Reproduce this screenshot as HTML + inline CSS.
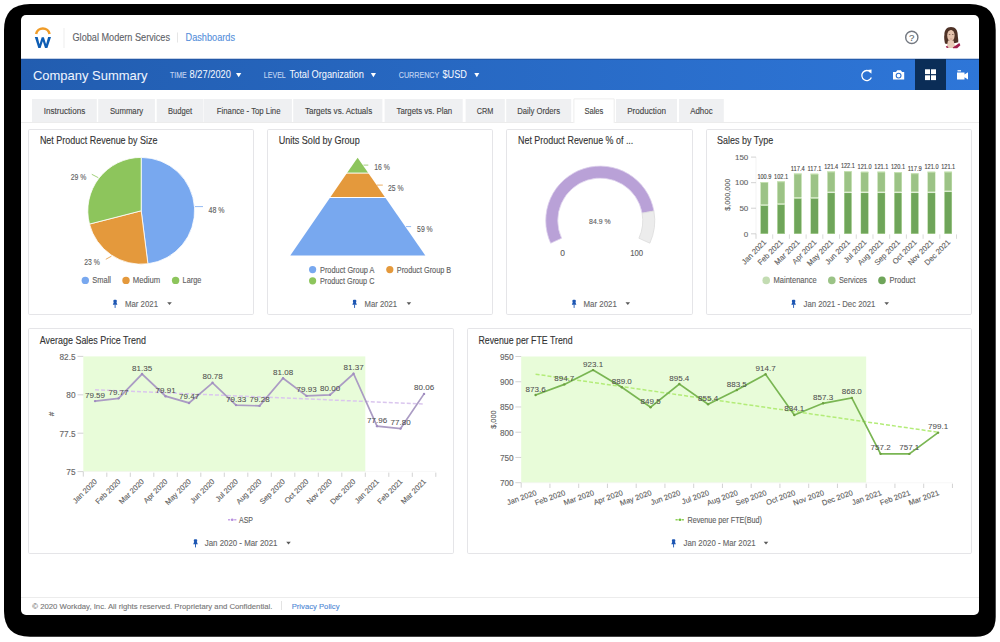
<!DOCTYPE html><html><head><meta charset="utf-8"><style>html,body{margin:0;padding:0;background:#fff;overflow:hidden}svg{display:block}text{font-family:"Liberation Sans",sans-serif}</style></head><body>
<svg width="1000" height="642" viewBox="0 0 1000 642">
<rect width="1000" height="642" fill="#fff"/>
<path d="M30,4 L969.7,4 Q995.7,4 995.7,30 L995.7,616.8 Q995.7,636.8 975.7,636.8 L30,636.8 Q4,636.8 4,610.8 L4,30 Q4,4 30,4 Z" fill="#000"/>
<rect x="21" y="15" width="958" height="600" rx="5" fill="#fff"/>
<path d="M36.1,33.9 A6.9,6.9 0 0 1 49.6,33.9" fill="none" stroke="#f09c28" stroke-width="2.5" stroke-linecap="butt"/>
<path d="M34.8,37 L37.7,37 L39.5,44.3 L41.7,37.3 L43.9,37.3 L46.1,44.3 L48.1,37 L51,37 L47.4,47.9 L45,47.9 L42.8,41.3 L40.6,47.9 L38.3,47.9 Z" fill="#0d5db4"/>
<rect x="63.5" y="28" width="1" height="20" fill="#ededed"/>
<text x="72.5" y="40.8" font-size="10.40" fill="#5e6268" stroke="#5e6268" stroke-width="0.12" text-anchor="start" font-weight="normal" textLength="97.5" lengthAdjust="spacingAndGlyphs">Global Modern Services</text>
<rect x="177" y="32.5" width="1" height="10" fill="#e6e6e6"/>
<text x="185.5" y="40.8" font-size="10.40" fill="#5590db" stroke="#5590db" stroke-width="0.12" text-anchor="start" font-weight="normal" textLength="49.5" lengthAdjust="spacingAndGlyphs">Dashboards</text>
<circle cx="911.8" cy="37.4" r="6.1" fill="none" stroke="#737880" stroke-width="1.4"/>
<text x="911.8" y="40.9" font-size="9.68" fill="#62676d" stroke="#62676d" stroke-width="0.12" text-anchor="middle" font-weight="normal">?</text>
<defs><filter id="soft" x="-20%" y="-20%" width="140%" height="140%"><feGaussianBlur stdDeviation="0.45"/></filter></defs>
<g filter="url(#soft)">
<path d="M951,27 C955.6,27 957.6,30.5 957.7,34.5 C957.8,37.5 958.6,40 958.2,42.2 L955.5,43 L947,44 L945,43.5 C944.4,40.5 943.8,37.5 944.4,34.8 C944.3,30.5 946.5,27 951,27 Z" fill="#4f3226"/>
<ellipse cx="950.9" cy="35.5" rx="3.7" ry="5.7" fill="#e5c3ad"/>
<path d="M948,40.5 L953.6,40.5 L954.5,44.5 L956.5,46.8 L954,48 L948.2,48 L946.8,46.4 Z" fill="#e9cbb8"/>
<path d="M952.8,47.6 L959.3,42.9 L960.4,45.2 L957.2,48.2 L953,48.3 Z" fill="#a01d4c"/>
<path d="M945.8,46 L948,46.5 L948.4,48 L946.5,47.8 Z" fill="#a01d4c"/>
<path d="M947.3,32.2 C948.2,29.6 953.6,29 955,32.5 L955.2,29.5 C953.2,27.9 948.8,27.9 947.3,30.2 Z" fill="#4f3226"/>
<rect x="948.8" y="34.2" width="1.5" height="0.8" fill="#7a5a4c"/><rect x="952" y="34.2" width="1.5" height="0.8" fill="#7a5a4c"/>
<rect x="949.8" y="38.6" width="2.6" height="0.8" fill="#c9968a"/>
</g>
<defs><linearGradient id="bg" x1="21" y1="0" x2="979" y2="0" gradientUnits="userSpaceOnUse"><stop offset="0" stop-color="#225db0"/><stop offset="1" stop-color="#2e76d8"/></linearGradient></defs>
<rect x="21" y="59" width="958" height="31" fill="url(#bg)"/>
<rect x="21" y="58.7" width="958" height="1.2" fill="#2456a4" opacity="0.9"/>
<rect x="915" y="59" width="31" height="31" fill="#0b2d57"/>
<text x="32.9" y="79.5" font-size="13.39" fill="#eef4ff" stroke="#eef4ff" stroke-width="0.04" text-anchor="start" font-weight="normal" textLength="114.7" lengthAdjust="spacingAndGlyphs">Company Summary</text>
<text x="170.0" y="77.7" font-size="8.45" fill="#c3d5f2" stroke="#c3d5f2" stroke-width="0.12" text-anchor="start" font-weight="normal" textLength="16.7" lengthAdjust="spacingAndGlyphs">TIME</text>
<text x="189.6" y="78.3" font-size="10.61" fill="#f4f8ff" stroke="#f4f8ff" stroke-width="0.04" text-anchor="start" font-weight="normal" textLength="41.3" lengthAdjust="spacingAndGlyphs">8/27/2020</text>
<path d="M236,73 L241.3,73 L238.65,77.2 Z" fill="#fff"/>
<text x="263.8" y="77.7" font-size="8.45" fill="#c3d5f2" stroke="#c3d5f2" stroke-width="0.12" text-anchor="start" font-weight="normal" textLength="22.0" lengthAdjust="spacingAndGlyphs">LEVEL</text>
<text x="289.5" y="78.3" font-size="10.61" fill="#f4f8ff" stroke="#f4f8ff" stroke-width="0.04" text-anchor="start" font-weight="normal" textLength="74.3" lengthAdjust="spacingAndGlyphs">Total Organization</text>
<path d="M370.8,73 L376,73 L373.4,77.2 Z" fill="#fff"/>
<text x="398.8" y="77.7" font-size="8.45" fill="#c3d5f2" stroke="#c3d5f2" stroke-width="0.12" text-anchor="start" font-weight="normal" textLength="40.5" lengthAdjust="spacingAndGlyphs">CURRENCY</text>
<text x="442.5" y="78.3" font-size="10.61" fill="#f4f8ff" stroke="#f4f8ff" stroke-width="0.04" text-anchor="start" font-weight="normal" textLength="24.5" lengthAdjust="spacingAndGlyphs">$USD</text>
<path d="M474.3,73 L479.3,73 L476.8,77.2 Z" fill="#fff"/>
<path d="M870.6,72.2 A5,5 0 1 0 871.4,77.6" fill="none" stroke="#fff" stroke-width="1.3"/>
<path d="M867.5,70.0 L871.6,69.6 L871.4,73.8 Z" fill="#fff"/>
<path d="M893,72 L896,72 L897.3,70.2 L900.8,70.2 L902.1,72 L904.2,72 L904.2,79.6 L893,79.6 Z" fill="#fff"/>
<circle cx="898.6" cy="75.6" r="2.4" fill="none" stroke="#2c71d1" stroke-width="1.1"/>
<rect x="925" y="69.3" width="5" height="4.8" fill="#fff"/>
<rect x="925" y="75.3" width="5" height="4.8" fill="#fff"/>
<rect x="931" y="69.3" width="5" height="4.8" fill="#fff"/>
<rect x="931" y="75.3" width="5" height="4.8" fill="#fff"/>
<path d="M957,72.5 L964.5,72.5 L964.5,74.6 L968,72.3 L968,79.4 L964.5,77.2 L964.5,79.4 L957,79.4 Z" fill="#fff"/>
<rect x="957.5" y="70.2" width="3.5" height="1.2" fill="#fff"/>
<rect x="21" y="122" width="958" height="1" fill="#ececec"/>
<rect x="32" y="99" width="64.8" height="23" fill="#eff0f2"/>
<text x="43.8" y="113.6" font-size="8.86" fill="#454545" stroke="#454545" stroke-width="0.12" text-anchor="start" font-weight="normal" textLength="41.4" lengthAdjust="spacingAndGlyphs">Instructions</text>
<rect x="98.2" y="99" width="56.7" height="23" fill="#eff0f2"/>
<text x="109.9" y="113.6" font-size="8.86" fill="#454545" stroke="#454545" stroke-width="0.12" text-anchor="start" font-weight="normal" textLength="33.3" lengthAdjust="spacingAndGlyphs">Summary</text>
<rect x="156.7" y="99" width="46.80000000000001" height="23" fill="#eff0f2"/>
<text x="168.0" y="113.6" font-size="8.86" fill="#454545" stroke="#454545" stroke-width="0.12" text-anchor="start" font-weight="normal" textLength="24.1" lengthAdjust="spacingAndGlyphs">Budget</text>
<rect x="204" y="99" width="87.89999999999998" height="23" fill="#eff0f2"/>
<text x="216.8" y="113.6" font-size="8.86" fill="#454545" stroke="#454545" stroke-width="0.12" text-anchor="start" font-weight="normal" textLength="63.7" lengthAdjust="spacingAndGlyphs">Finance - Top Line</text>
<rect x="293.2" y="99" width="89.19999999999999" height="23" fill="#eff0f2"/>
<text x="304.9" y="113.6" font-size="8.86" fill="#454545" stroke="#454545" stroke-width="0.12" text-anchor="start" font-weight="normal" textLength="67.3" lengthAdjust="spacingAndGlyphs">Targets vs. Actuals</text>
<rect x="384.6" y="99" width="78.09999999999997" height="23" fill="#eff0f2"/>
<text x="396.5" y="113.6" font-size="8.86" fill="#454545" stroke="#454545" stroke-width="0.12" text-anchor="start" font-weight="normal" textLength="55.7" lengthAdjust="spacingAndGlyphs">Targets vs. Plan</text>
<rect x="465.6" y="99" width="39.19999999999999" height="23" fill="#eff0f2"/>
<text x="476.8" y="113.6" font-size="8.86" fill="#454545" stroke="#454545" stroke-width="0.12" text-anchor="start" font-weight="normal" textLength="16.6" lengthAdjust="spacingAndGlyphs">CRM</text>
<rect x="506.2" y="99" width="65.00000000000006" height="23" fill="#eff0f2"/>
<text x="517.2" y="113.6" font-size="8.86" fill="#454545" stroke="#454545" stroke-width="0.12" text-anchor="start" font-weight="normal" textLength="42.8" lengthAdjust="spacingAndGlyphs">Daily Orders</text>
<rect x="573.5" y="98.5" width="41.10000000000002" height="24.5" fill="#fff"/>
<path d="M573.9,123 L573.9,98.9 L614.2,98.9 L614.2,123" fill="none" stroke="#ebebeb" stroke-width="0.9"/>
<text x="584.4" y="113.6" font-size="8.86" fill="#454545" stroke="#454545" stroke-width="0.12" text-anchor="start" font-weight="normal" textLength="19.0" lengthAdjust="spacingAndGlyphs">Sales</text>
<rect x="616" y="99" width="61" height="23" fill="#eff0f2"/>
<text x="627.2" y="113.6" font-size="8.86" fill="#454545" stroke="#454545" stroke-width="0.12" text-anchor="start" font-weight="normal" textLength="38.7" lengthAdjust="spacingAndGlyphs">Production</text>
<rect x="679" y="99" width="44.799999999999955" height="23" fill="#eff0f2"/>
<text x="690.2" y="113.6" font-size="8.86" fill="#454545" stroke="#454545" stroke-width="0.12" text-anchor="start" font-weight="normal" textLength="22.4" lengthAdjust="spacingAndGlyphs">Adhoc</text>
<rect x="28.5" y="129.5" width="225" height="185" rx="1.2" fill="#fff" stroke="#e5e5e8" stroke-width="1"/>
<rect x="267.5" y="129.5" width="225" height="185" rx="1.2" fill="#fff" stroke="#e5e5e8" stroke-width="1"/>
<rect x="506.5" y="129.5" width="186" height="185" rx="1.2" fill="#fff" stroke="#e5e5e8" stroke-width="1"/>
<rect x="706.5" y="129.5" width="265" height="185" rx="1.2" fill="#fff" stroke="#e5e5e8" stroke-width="1"/>
<rect x="28.5" y="328.5" width="425" height="225" rx="1.2" fill="#fff" stroke="#e5e5e8" stroke-width="1"/>
<rect x="467.5" y="328.5" width="504" height="225" rx="1.2" fill="#fff" stroke="#e5e5e8" stroke-width="1"/>
<text x="39.9" y="144.0" font-size="9.99" fill="#333" stroke="#333" stroke-width="0.12" text-anchor="start" font-weight="normal" textLength="117.6" lengthAdjust="spacingAndGlyphs">Net Product Revenue by Size</text>
<text x="278.7" y="144.0" font-size="9.99" fill="#333" stroke="#333" stroke-width="0.12" text-anchor="start" font-weight="normal" textLength="81.0" lengthAdjust="spacingAndGlyphs">Units Sold by Group</text>
<text x="518.0" y="144.0" font-size="9.99" fill="#333" stroke="#333" stroke-width="0.12" text-anchor="start" font-weight="normal" textLength="115.3" lengthAdjust="spacingAndGlyphs">Net Product Revenue % of ...</text>
<text x="717.1" y="144.0" font-size="9.99" fill="#333" stroke="#333" stroke-width="0.12" text-anchor="start" font-weight="normal" textLength="56.1" lengthAdjust="spacingAndGlyphs">Sales by Type</text>
<text x="39.8" y="343.6" font-size="9.99" fill="#333" stroke="#333" stroke-width="0.12" text-anchor="start" font-weight="normal" textLength="106.2" lengthAdjust="spacingAndGlyphs">Average Sales Price Trend</text>
<text x="478.5" y="343.6" font-size="9.99" fill="#333" stroke="#333" stroke-width="0.12" text-anchor="start" font-weight="normal" textLength="94.0" lengthAdjust="spacingAndGlyphs">Revenue per FTE Trend</text>
<rect x="113.4" y="299.8" width="3.4" height="2.6" rx="1" fill="#1d56b3"/>
<path d="M113.9,302.1 L116.3,302.1 L117.4,304.7 L112.8,304.7 Z" fill="#1d56b3"/>
<rect x="114.65" y="304.5" width="0.9" height="3.4" fill="#1d56b3"/>
<text x="125.0" y="306.7" font-size="8.65" fill="#666" stroke="#666" stroke-width="0.12" text-anchor="start" font-weight="normal" textLength="33.0" lengthAdjust="spacingAndGlyphs">Mar 2021</text>
<path d="M167.2,302.3 L171.79999999999998,302.3 L169.5,304.90000000000003 Z" fill="#5a5a5a"/>
<rect x="352.9" y="299.8" width="3.4" height="2.6" rx="1" fill="#1d56b3"/>
<path d="M353.4,302.1 L355.8,302.1 L356.9,304.7 L352.3,304.7 Z" fill="#1d56b3"/>
<rect x="354.15" y="304.5" width="0.9" height="3.4" fill="#1d56b3"/>
<text x="364.6" y="306.7" font-size="8.65" fill="#666" stroke="#666" stroke-width="0.12" text-anchor="start" font-weight="normal" textLength="32.5" lengthAdjust="spacingAndGlyphs">Mar 2021</text>
<path d="M406.6,302.3 L411.20000000000005,302.3 L408.90000000000003,304.90000000000003 Z" fill="#5a5a5a"/>
<rect x="572.4" y="299.8" width="3.4" height="2.6" rx="1" fill="#1d56b3"/>
<path d="M572.9,302.1 L575.3,302.1 L576.4,304.7 L571.8,304.7 Z" fill="#1d56b3"/>
<rect x="573.65" y="304.5" width="0.9" height="3.4" fill="#1d56b3"/>
<text x="583.5" y="306.7" font-size="8.65" fill="#666" stroke="#666" stroke-width="0.12" text-anchor="start" font-weight="normal" textLength="33.3" lengthAdjust="spacingAndGlyphs">Mar 2021</text>
<path d="M625.5,302.3 L630.1,302.3 L627.8,304.90000000000003 Z" fill="#5a5a5a"/>
<rect x="791.9" y="299.8" width="3.4" height="2.6" rx="1" fill="#1d56b3"/>
<path d="M792.4,302.1 L794.8,302.1 L795.9,304.7 L791.3,304.7 Z" fill="#1d56b3"/>
<rect x="793.15" y="304.5" width="0.9" height="3.4" fill="#1d56b3"/>
<text x="803.6" y="306.7" font-size="8.65" fill="#666" stroke="#666" stroke-width="0.12" text-anchor="start" font-weight="normal" textLength="71.8" lengthAdjust="spacingAndGlyphs">Jan 2021 - Dec 2021</text>
<path d="M884.4,302.3 L889.0,302.3 L886.6999999999999,304.90000000000003 Z" fill="#5a5a5a"/>
<rect x="193.8" y="539.3" width="3.4" height="2.6" rx="1" fill="#1d56b3"/>
<path d="M194.3,541.6 L196.70000000000002,541.6 L197.8,544.2 L193.20000000000002,544.2 Z" fill="#1d56b3"/>
<rect x="195.05" y="544" width="0.9" height="3.4" fill="#1d56b3"/>
<text x="204.8" y="546.2" font-size="8.65" fill="#666" stroke="#666" stroke-width="0.12" text-anchor="start" font-weight="normal" textLength="72.6" lengthAdjust="spacingAndGlyphs">Jan 2020 - Mar 2021</text>
<path d="M286.2,541.8 L290.8,541.8 L288.5,544.4 Z" fill="#5a5a5a"/>
<rect x="671.9" y="539.3" width="3.4" height="2.6" rx="1" fill="#1d56b3"/>
<path d="M672.4,541.6 L674.8,541.6 L675.9,544.2 L671.3,544.2 Z" fill="#1d56b3"/>
<rect x="673.15" y="544" width="0.9" height="3.4" fill="#1d56b3"/>
<text x="683.6" y="546.2" font-size="8.65" fill="#666" stroke="#666" stroke-width="0.12" text-anchor="start" font-weight="normal" textLength="72.1" lengthAdjust="spacingAndGlyphs">Jan 2020 - Mar 2021</text>
<path d="M763.7,541.8 L768.3000000000001,541.8 L766.0,544.4 Z" fill="#5a5a5a"/>
<path d="M141.2,210.8 L141.20,157.40 A53.4,53.4 0 0 1 147.89,263.78 Z" fill="#78a8ef" stroke="#fff" stroke-width="0.8"/>
<path d="M141.2,210.8 L147.89,263.78 A53.4,53.4 0 0 1 89.48,224.08 Z" fill="#e4993c" stroke="#fff" stroke-width="0.8"/>
<path d="M141.2,210.8 L89.48,224.08 A53.4,53.4 0 0 1 141.20,157.40 Z" fill="#8dc55c" stroke="#fff" stroke-width="0.8"/>
<line x1="195" y1="206.6" x2="203" y2="206.6" stroke="#78a8ef" stroke-width="0.8"/>
<path d="M91.8,174.3 L98.3,177.7" stroke="#8dc55c" stroke-width="0.8"/>
<path d="M105.8,259.3 L111.4,256.2" stroke="#e4993c" stroke-width="0.8"/>
<text x="208.6" y="212.6" font-size="8.24" fill="#606060" stroke="#606060" stroke-width="0.12" text-anchor="start" font-weight="normal" textLength="16.0" lengthAdjust="spacingAndGlyphs">48 %</text>
<text x="70.8" y="180.4" font-size="8.24" fill="#606060" stroke="#606060" stroke-width="0.12" text-anchor="start" font-weight="normal" textLength="15.6" lengthAdjust="spacingAndGlyphs">29 %</text>
<text x="84.3" y="265.4" font-size="8.24" fill="#606060" stroke="#606060" stroke-width="0.12" text-anchor="start" font-weight="normal" textLength="15.6" lengthAdjust="spacingAndGlyphs">23 %</text>
<circle cx="85.3" cy="280.4" r="3.7" fill="#78a8ef"/>
<text x="92.3" y="283.4" font-size="8.45" fill="#606060" stroke="#606060" stroke-width="0.12" text-anchor="start" font-weight="normal" textLength="18.7" lengthAdjust="spacingAndGlyphs">Small</text>
<circle cx="126" cy="280.4" r="3.7" fill="#e4993c"/>
<text x="132.8" y="283.4" font-size="8.45" fill="#606060" stroke="#606060" stroke-width="0.12" text-anchor="start" font-weight="normal" textLength="27.4" lengthAdjust="spacingAndGlyphs">Medium</text>
<circle cx="175.6" cy="280.4" r="3.7" fill="#8dc55c"/>
<text x="182.6" y="283.4" font-size="8.45" fill="#606060" stroke="#606060" stroke-width="0.12" text-anchor="start" font-weight="normal" textLength="18.7" lengthAdjust="spacingAndGlyphs">Large</text>
<path d="M357.6,157.7 L368.27,173.1 L346.99,173.1 Z" fill="#8dc55c"/>
<path d="M346.99,173.1 L368.27,173.1 L385.18,197.5 L330.18,197.5 Z" fill="#e4993c"/>
<path d="M330.18,197.5 L385.18,197.5 L425.3,255.4 L290.3,255.4 Z" fill="#78a8ef"/>
<rect x="345.9918116683726" y="172.6" width="23.2794268167861" height="1" fill="#fff"/>
<rect x="329.1840327533265" y="197.0" width="56.99488229273288" height="1" fill="#fff"/>
<line x1="363.5" y1="165.1" x2="368.3" y2="165.1" stroke="#8dc55c" stroke-width="0.8"/>
<line x1="376.8" y1="185.1" x2="382.8" y2="185.1" stroke="#e4993c" stroke-width="0.8"/>
<line x1="406" y1="226.6" x2="411.1" y2="226.6" stroke="#78a8ef" stroke-width="0.8"/>
<text x="374.3" y="170.4" font-size="8.24" fill="#606060" stroke="#606060" stroke-width="0.12" text-anchor="start" font-weight="normal" textLength="15.6" lengthAdjust="spacingAndGlyphs">16 %</text>
<text x="388.0" y="190.9" font-size="8.24" fill="#606060" stroke="#606060" stroke-width="0.12" text-anchor="start" font-weight="normal" textLength="15.6" lengthAdjust="spacingAndGlyphs">25 %</text>
<text x="417.1" y="232.0" font-size="8.24" fill="#606060" stroke="#606060" stroke-width="0.12" text-anchor="start" font-weight="normal" textLength="15.6" lengthAdjust="spacingAndGlyphs">59 %</text>
<circle cx="312.6" cy="269.6" r="3.6" fill="#78a8ef"/>
<text x="320.0" y="272.6" font-size="8.45" fill="#606060" stroke="#606060" stroke-width="0.12" text-anchor="start" font-weight="normal" textLength="54.4" lengthAdjust="spacingAndGlyphs">Product Group A</text>
<circle cx="389.8" cy="269.6" r="3.6" fill="#e4993c"/>
<text x="396.8" y="272.6" font-size="8.45" fill="#606060" stroke="#606060" stroke-width="0.12" text-anchor="start" font-weight="normal" textLength="54.4" lengthAdjust="spacingAndGlyphs">Product Group B</text>
<circle cx="312.6" cy="280.8" r="3.6" fill="#8dc55c"/>
<text x="320.0" y="283.8" font-size="8.45" fill="#606060" stroke="#606060" stroke-width="0.12" text-anchor="start" font-weight="normal" textLength="54.4" lengthAdjust="spacingAndGlyphs">Product Group C</text>
<path d="M550.66,243.20 A54.5,54.5 0 1 1 653.91,211.06 L642.09,213.16 A42.5,42.5 0 1 0 561.58,238.22 Z" fill="#b9a1d7" stroke="#ddd0ec" stroke-width="0.8"/>
<path d="M653.91,211.06 A54.5,54.5 0 0 1 649.84,243.20 L638.92,238.22 A42.5,42.5 0 0 0 642.09,213.16 Z" fill="#ececec" stroke="#dcdcdc" stroke-width="0.8"/>
<text x="599.8" y="223.6" font-size="8.03" fill="#606060" stroke="#606060" stroke-width="0.12" text-anchor="middle" font-weight="normal" textLength="21.5" lengthAdjust="spacingAndGlyphs">84.9 %</text>
<text x="562.6" y="256.3" font-size="8.45" fill="#606060" stroke="#606060" stroke-width="0.12" text-anchor="middle" font-weight="normal">0</text>
<text x="636.6" y="256.3" font-size="8.24" fill="#606060" stroke="#606060" stroke-width="0.12" text-anchor="middle" font-weight="normal" textLength="12.9" lengthAdjust="spacingAndGlyphs">100</text>
<line x1="756.0" y1="157" x2="756.0" y2="233.8" stroke="#f0f0f0" stroke-width="0.8"/>
<line x1="756.0" y1="233.8" x2="756.0" y2="238.8" stroke="#c8c8c8" stroke-width="0.8"/>
<line x1="751" y1="233.80" x2="756.0" y2="233.80" stroke="#c8c8c8" stroke-width="0.8"/>
<text x="748.3" y="236.5" font-size="8.03" fill="#666" stroke="#666" stroke-width="0.12" text-anchor="end" font-weight="normal">0</text>
<line x1="751" y1="208.23" x2="756.0" y2="208.23" stroke="#c8c8c8" stroke-width="0.8"/>
<text x="748.3" y="210.9" font-size="8.03" fill="#666" stroke="#666" stroke-width="0.12" text-anchor="end" font-weight="normal">50</text>
<line x1="751" y1="182.67" x2="756.0" y2="182.67" stroke="#c8c8c8" stroke-width="0.8"/>
<text x="748.3" y="185.4" font-size="8.03" fill="#666" stroke="#666" stroke-width="0.12" text-anchor="end" font-weight="normal">100</text>
<line x1="751" y1="157.10" x2="756.0" y2="157.10" stroke="#c8c8c8" stroke-width="0.8"/>
<text x="748.3" y="159.8" font-size="8.03" fill="#666" stroke="#666" stroke-width="0.12" text-anchor="end" font-weight="normal">150</text>
<text x="0.0" y="0.0" font-size="8.03" fill="#5a5a5a" stroke="#5a5a5a" stroke-width="0.12" text-anchor="middle" font-weight="normal" textLength="32.0" lengthAdjust="spacingAndGlyphs" transform="translate(730.3,194.8) rotate(-90)">$,000,000</text>
<line x1="772.71" y1="234.4" x2="772.71" y2="238.8" stroke="#d0d0d0" stroke-width="0.8"/>
<line x1="789.42" y1="234.4" x2="789.42" y2="238.8" stroke="#d0d0d0" stroke-width="0.8"/>
<line x1="806.13" y1="234.4" x2="806.13" y2="238.8" stroke="#d0d0d0" stroke-width="0.8"/>
<line x1="822.84" y1="234.4" x2="822.84" y2="238.8" stroke="#d0d0d0" stroke-width="0.8"/>
<line x1="839.55" y1="234.4" x2="839.55" y2="238.8" stroke="#d0d0d0" stroke-width="0.8"/>
<line x1="856.26" y1="234.4" x2="856.26" y2="238.8" stroke="#d0d0d0" stroke-width="0.8"/>
<line x1="872.97" y1="234.4" x2="872.97" y2="238.8" stroke="#d0d0d0" stroke-width="0.8"/>
<line x1="889.68" y1="234.4" x2="889.68" y2="238.8" stroke="#d0d0d0" stroke-width="0.8"/>
<line x1="906.39" y1="234.4" x2="906.39" y2="238.8" stroke="#d0d0d0" stroke-width="0.8"/>
<line x1="923.10" y1="234.4" x2="923.10" y2="238.8" stroke="#d0d0d0" stroke-width="0.8"/>
<line x1="939.81" y1="234.4" x2="939.81" y2="238.8" stroke="#d0d0d0" stroke-width="0.8"/>
<line x1="956.52" y1="234.4" x2="956.52" y2="238.8" stroke="#d0d0d0" stroke-width="0.8"/>
<rect x="760.65" y="205.68" width="7.4" height="28.12" fill="#6fa55a" stroke="#b9e09c" stroke-width="0.35"/>
<rect x="760.65" y="182.21" width="7.4" height="22.37" fill="#9cc386" stroke="#c6e6ad" stroke-width="0.35"/>
<rect x="760.65" y="182.01" width="7.4" height="0.9" fill="#c5e0b0"/>
<text x="764.4" y="179.2" font-size="7.00" fill="#444" stroke="#444" stroke-width="0.12" text-anchor="middle" font-weight="normal" textLength="14.0" lengthAdjust="spacingAndGlyphs">100.9</text>
<text x="0.0" y="0.0" font-size="7.62" fill="#606060" stroke="#606060" stroke-width="0.12" text-anchor="end" font-weight="normal" transform="translate(766.86,242.8) rotate(-45)">Jan 2021</text>
<rect x="777.37" y="204.65" width="7.4" height="29.15" fill="#6fa55a" stroke="#b9e09c" stroke-width="0.35"/>
<rect x="777.37" y="181.59" width="7.4" height="21.96" fill="#9cc386" stroke="#c6e6ad" stroke-width="0.35"/>
<rect x="777.37" y="181.39" width="7.4" height="0.9" fill="#c5e0b0"/>
<text x="781.1" y="178.6" font-size="7.00" fill="#444" stroke="#444" stroke-width="0.12" text-anchor="middle" font-weight="normal" textLength="14.0" lengthAdjust="spacingAndGlyphs">102.1</text>
<text x="0.0" y="0.0" font-size="7.62" fill="#606060" stroke="#606060" stroke-width="0.12" text-anchor="end" font-weight="normal" transform="translate(783.57,242.8) rotate(-45)">Feb 2021</text>
<rect x="794.07" y="198.52" width="7.4" height="35.28" fill="#6fa55a" stroke="#b9e09c" stroke-width="0.35"/>
<rect x="794.07" y="173.77" width="7.4" height="23.65" fill="#9cc386" stroke="#c6e6ad" stroke-width="0.35"/>
<rect x="794.07" y="173.57" width="7.4" height="0.9" fill="#c5e0b0"/>
<text x="797.8" y="170.8" font-size="7.00" fill="#444" stroke="#444" stroke-width="0.12" text-anchor="middle" font-weight="normal" textLength="14.0" lengthAdjust="spacingAndGlyphs">117.4</text>
<text x="0.0" y="0.0" font-size="7.62" fill="#606060" stroke="#606060" stroke-width="0.12" text-anchor="end" font-weight="normal" transform="translate(800.27,242.8) rotate(-45)">Mar 2021</text>
<rect x="810.78" y="198.52" width="7.4" height="35.28" fill="#6fa55a" stroke="#b9e09c" stroke-width="0.35"/>
<rect x="810.78" y="173.92" width="7.4" height="23.50" fill="#9cc386" stroke="#c6e6ad" stroke-width="0.35"/>
<rect x="810.78" y="173.72" width="7.4" height="0.9" fill="#c5e0b0"/>
<text x="814.5" y="170.9" font-size="7.00" fill="#444" stroke="#444" stroke-width="0.12" text-anchor="middle" font-weight="normal" textLength="14.0" lengthAdjust="spacingAndGlyphs">117.1</text>
<text x="0.0" y="0.0" font-size="7.62" fill="#606060" stroke="#606060" stroke-width="0.12" text-anchor="end" font-weight="normal" transform="translate(816.99,242.8) rotate(-45)">Apr 2021</text>
<rect x="827.50" y="192.89" width="7.4" height="40.91" fill="#6fa55a" stroke="#b9e09c" stroke-width="0.35"/>
<rect x="827.50" y="171.72" width="7.4" height="20.07" fill="#9cc386" stroke="#c6e6ad" stroke-width="0.35"/>
<rect x="827.50" y="171.52" width="7.4" height="0.9" fill="#c5e0b0"/>
<text x="831.2" y="168.7" font-size="7.00" fill="#444" stroke="#444" stroke-width="0.12" text-anchor="middle" font-weight="normal" textLength="14.0" lengthAdjust="spacingAndGlyphs">121.4</text>
<text x="0.0" y="0.0" font-size="7.62" fill="#606060" stroke="#606060" stroke-width="0.12" text-anchor="end" font-weight="normal" transform="translate(833.70,242.8) rotate(-45)">May 2021</text>
<rect x="844.20" y="192.89" width="7.4" height="40.91" fill="#6fa55a" stroke="#b9e09c" stroke-width="0.35"/>
<rect x="844.20" y="171.37" width="7.4" height="20.43" fill="#9cc386" stroke="#c6e6ad" stroke-width="0.35"/>
<rect x="844.20" y="171.17" width="7.4" height="0.9" fill="#c5e0b0"/>
<text x="847.9" y="168.4" font-size="7.00" fill="#444" stroke="#444" stroke-width="0.12" text-anchor="middle" font-weight="normal" textLength="14.0" lengthAdjust="spacingAndGlyphs">122.1</text>
<text x="0.0" y="0.0" font-size="7.62" fill="#606060" stroke="#606060" stroke-width="0.12" text-anchor="end" font-weight="normal" transform="translate(850.40,242.8) rotate(-45)">Jun 2021</text>
<rect x="860.91" y="192.89" width="7.4" height="40.91" fill="#6fa55a" stroke="#b9e09c" stroke-width="0.35"/>
<rect x="860.91" y="171.93" width="7.4" height="19.86" fill="#9cc386" stroke="#c6e6ad" stroke-width="0.35"/>
<rect x="860.91" y="171.73" width="7.4" height="0.9" fill="#c5e0b0"/>
<text x="864.6" y="168.9" font-size="7.00" fill="#444" stroke="#444" stroke-width="0.12" text-anchor="middle" font-weight="normal" textLength="14.0" lengthAdjust="spacingAndGlyphs">121.0</text>
<text x="0.0" y="0.0" font-size="7.62" fill="#606060" stroke="#606060" stroke-width="0.12" text-anchor="end" font-weight="normal" transform="translate(867.12,242.8) rotate(-45)">Jul 2021</text>
<rect x="877.62" y="192.89" width="7.4" height="40.91" fill="#6fa55a" stroke="#b9e09c" stroke-width="0.35"/>
<rect x="877.62" y="171.88" width="7.4" height="19.92" fill="#9cc386" stroke="#c6e6ad" stroke-width="0.35"/>
<rect x="877.62" y="171.68" width="7.4" height="0.9" fill="#c5e0b0"/>
<text x="881.3" y="168.9" font-size="7.00" fill="#444" stroke="#444" stroke-width="0.12" text-anchor="middle" font-weight="normal" textLength="14.0" lengthAdjust="spacingAndGlyphs">121.1</text>
<text x="0.0" y="0.0" font-size="7.62" fill="#606060" stroke="#606060" stroke-width="0.12" text-anchor="end" font-weight="normal" transform="translate(883.83,242.8) rotate(-45)">Aug 2021</text>
<rect x="894.33" y="192.89" width="7.4" height="40.91" fill="#6fa55a" stroke="#b9e09c" stroke-width="0.35"/>
<rect x="894.33" y="172.39" width="7.4" height="19.40" fill="#9cc386" stroke="#c6e6ad" stroke-width="0.35"/>
<rect x="894.33" y="172.19" width="7.4" height="0.9" fill="#c5e0b0"/>
<text x="898.0" y="169.4" font-size="7.00" fill="#444" stroke="#444" stroke-width="0.12" text-anchor="middle" font-weight="normal" textLength="14.0" lengthAdjust="spacingAndGlyphs">120.1</text>
<text x="0.0" y="0.0" font-size="7.62" fill="#606060" stroke="#606060" stroke-width="0.12" text-anchor="end" font-weight="normal" transform="translate(900.53,242.8) rotate(-45)">Sep 2021</text>
<rect x="911.04" y="192.89" width="7.4" height="40.91" fill="#6fa55a" stroke="#b9e09c" stroke-width="0.35"/>
<rect x="911.04" y="173.51" width="7.4" height="18.28" fill="#9cc386" stroke="#c6e6ad" stroke-width="0.35"/>
<rect x="911.04" y="173.31" width="7.4" height="0.9" fill="#c5e0b0"/>
<text x="914.7" y="170.5" font-size="7.00" fill="#444" stroke="#444" stroke-width="0.12" text-anchor="middle" font-weight="normal" textLength="14.0" lengthAdjust="spacingAndGlyphs">117.9</text>
<text x="0.0" y="0.0" font-size="7.62" fill="#606060" stroke="#606060" stroke-width="0.12" text-anchor="end" font-weight="normal" transform="translate(917.25,242.8) rotate(-45)">Oct 2021</text>
<rect x="927.75" y="192.89" width="7.4" height="40.91" fill="#6fa55a" stroke="#b9e09c" stroke-width="0.35"/>
<rect x="927.75" y="171.93" width="7.4" height="19.86" fill="#9cc386" stroke="#c6e6ad" stroke-width="0.35"/>
<rect x="927.75" y="171.73" width="7.4" height="0.9" fill="#c5e0b0"/>
<text x="931.5" y="168.9" font-size="7.00" fill="#444" stroke="#444" stroke-width="0.12" text-anchor="middle" font-weight="normal" textLength="14.0" lengthAdjust="spacingAndGlyphs">121.0</text>
<text x="0.0" y="0.0" font-size="7.62" fill="#606060" stroke="#606060" stroke-width="0.12" text-anchor="end" font-weight="normal" transform="translate(933.96,242.8) rotate(-45)">Nov 2021</text>
<rect x="944.46" y="191.87" width="7.4" height="41.93" fill="#6fa55a" stroke="#b9e09c" stroke-width="0.35"/>
<rect x="944.46" y="171.88" width="7.4" height="18.89" fill="#9cc386" stroke="#c6e6ad" stroke-width="0.35"/>
<rect x="944.46" y="171.68" width="7.4" height="0.9" fill="#c5e0b0"/>
<text x="948.2" y="168.9" font-size="7.00" fill="#444" stroke="#444" stroke-width="0.12" text-anchor="middle" font-weight="normal" textLength="14.0" lengthAdjust="spacingAndGlyphs">121.1</text>
<text x="0.0" y="0.0" font-size="7.62" fill="#606060" stroke="#606060" stroke-width="0.12" text-anchor="end" font-weight="normal" transform="translate(950.66,242.8) rotate(-45)">Dec 2021</text>
<circle cx="766.2" cy="280.4" r="3.8" fill="#c3dcb2"/>
<text x="773.6" y="283.4" font-size="8.45" fill="#606060" stroke="#606060" stroke-width="0.12" text-anchor="start" font-weight="normal" textLength="43.0" lengthAdjust="spacingAndGlyphs">Maintenance</text>
<circle cx="831.8" cy="280.4" r="3.8" fill="#9bc386"/>
<text x="839.0" y="283.4" font-size="8.45" fill="#606060" stroke="#606060" stroke-width="0.12" text-anchor="start" font-weight="normal" textLength="28.0" lengthAdjust="spacingAndGlyphs">Services</text>
<circle cx="882" cy="280.4" r="3.8" fill="#6fa55a"/>
<text x="889.6" y="283.4" font-size="8.45" fill="#606060" stroke="#606060" stroke-width="0.12" text-anchor="start" font-weight="normal" textLength="25.8" lengthAdjust="spacingAndGlyphs">Product</text>
<rect x="83.3" y="356.4" width="282.00" height="115.20" fill="#e8fcd9"/>
<line x1="77.5" y1="471.60" x2="83.3" y2="471.60" stroke="#c8c8c8" stroke-width="0.8"/>
<text x="75.5" y="475.0" font-size="8.24" fill="#666" stroke="#666" stroke-width="0.12" text-anchor="end" font-weight="normal">75</text>
<line x1="77.5" y1="433.20" x2="83.3" y2="433.20" stroke="#c8c8c8" stroke-width="0.8"/>
<text x="75.5" y="436.6" font-size="8.24" fill="#666" stroke="#666" stroke-width="0.12" text-anchor="end" font-weight="normal">77.5</text>
<line x1="77.5" y1="394.80" x2="83.3" y2="394.80" stroke="#c8c8c8" stroke-width="0.8"/>
<text x="75.5" y="398.2" font-size="8.24" fill="#666" stroke="#666" stroke-width="0.12" text-anchor="end" font-weight="normal">80</text>
<line x1="77.5" y1="356.40" x2="83.3" y2="356.40" stroke="#c8c8c8" stroke-width="0.8"/>
<text x="75.5" y="359.8" font-size="8.24" fill="#666" stroke="#666" stroke-width="0.12" text-anchor="end" font-weight="normal">82.5</text>
<line x1="83.3" y1="471.6" x2="435.80" y2="471.6" stroke="#f2f2f2" stroke-width="0.6"/>
<line x1="83.3" y1="471.6" x2="83.3" y2="476.6" stroke="#c8c8c8" stroke-width="0.8"/>
<line x1="106.80" y1="472.6" x2="106.80" y2="476.90000000000003" stroke="#c8c8c8" stroke-width="0.8"/>
<line x1="130.30" y1="472.6" x2="130.30" y2="476.90000000000003" stroke="#c8c8c8" stroke-width="0.8"/>
<line x1="153.80" y1="472.6" x2="153.80" y2="476.90000000000003" stroke="#c8c8c8" stroke-width="0.8"/>
<line x1="177.30" y1="472.6" x2="177.30" y2="476.90000000000003" stroke="#c8c8c8" stroke-width="0.8"/>
<line x1="200.80" y1="472.6" x2="200.80" y2="476.90000000000003" stroke="#c8c8c8" stroke-width="0.8"/>
<line x1="224.30" y1="472.6" x2="224.30" y2="476.90000000000003" stroke="#c8c8c8" stroke-width="0.8"/>
<line x1="247.80" y1="472.6" x2="247.80" y2="476.90000000000003" stroke="#c8c8c8" stroke-width="0.8"/>
<line x1="271.30" y1="472.6" x2="271.30" y2="476.90000000000003" stroke="#c8c8c8" stroke-width="0.8"/>
<line x1="294.80" y1="472.6" x2="294.80" y2="476.90000000000003" stroke="#c8c8c8" stroke-width="0.8"/>
<line x1="318.30" y1="472.6" x2="318.30" y2="476.90000000000003" stroke="#c8c8c8" stroke-width="0.8"/>
<line x1="341.80" y1="472.6" x2="341.80" y2="476.90000000000003" stroke="#c8c8c8" stroke-width="0.8"/>
<line x1="365.30" y1="472.6" x2="365.30" y2="476.90000000000003" stroke="#c8c8c8" stroke-width="0.8"/>
<line x1="388.80" y1="472.6" x2="388.80" y2="476.90000000000003" stroke="#c8c8c8" stroke-width="0.8"/>
<line x1="412.30" y1="472.6" x2="412.30" y2="476.90000000000003" stroke="#c8c8c8" stroke-width="0.8"/>
<line x1="435.80" y1="472.6" x2="435.80" y2="476.90000000000003" stroke="#c8c8c8" stroke-width="0.8"/>
<line x1="95.05" y1="389.73" x2="424.05" y2="404.02" stroke="#dac6ee" stroke-width="1.5" stroke-dasharray="4,2"/>
<polyline points="95.05,401.10 118.55,398.33 142.05,374.06 165.55,396.18 189.05,402.94 212.55,382.82 236.05,405.09 259.55,405.86 283.05,378.21 306.55,395.88 330.05,394.80 353.55,373.76 377.05,426.13 400.55,428.59 424.05,393.88" fill="none" stroke="#ab9cc4" stroke-width="1.7" stroke-linejoin="miter"/>
<circle cx="95.05" cy="401.10" r="1.2" fill="#a08cc0"/>
<text x="95.0" y="397.5" font-size="8.03" fill="#505050" stroke="#505050" stroke-width="0.06" text-anchor="middle" font-weight="normal">79.59</text>
<circle cx="118.55" cy="398.33" r="1.2" fill="#a08cc0"/>
<text x="118.5" y="394.7" font-size="8.03" fill="#505050" stroke="#505050" stroke-width="0.06" text-anchor="middle" font-weight="normal">79.77</text>
<circle cx="142.05" cy="374.06" r="1.2" fill="#a08cc0"/>
<text x="142.1" y="370.5" font-size="8.03" fill="#505050" stroke="#505050" stroke-width="0.06" text-anchor="middle" font-weight="normal">81.35</text>
<circle cx="165.55" cy="396.18" r="1.2" fill="#a08cc0"/>
<text x="165.6" y="392.6" font-size="8.03" fill="#505050" stroke="#505050" stroke-width="0.06" text-anchor="middle" font-weight="normal">79.91</text>
<circle cx="189.05" cy="402.94" r="1.2" fill="#a08cc0"/>
<text x="189.1" y="399.3" font-size="8.03" fill="#505050" stroke="#505050" stroke-width="0.06" text-anchor="middle" font-weight="normal">79.47</text>
<circle cx="212.55" cy="382.82" r="1.2" fill="#a08cc0"/>
<text x="212.6" y="379.2" font-size="8.03" fill="#505050" stroke="#505050" stroke-width="0.06" text-anchor="middle" font-weight="normal">80.78</text>
<circle cx="236.05" cy="405.09" r="1.2" fill="#a08cc0"/>
<text x="236.1" y="401.5" font-size="8.03" fill="#505050" stroke="#505050" stroke-width="0.06" text-anchor="middle" font-weight="normal">79.33</text>
<circle cx="259.55" cy="405.86" r="1.2" fill="#a08cc0"/>
<text x="259.6" y="402.3" font-size="8.03" fill="#505050" stroke="#505050" stroke-width="0.06" text-anchor="middle" font-weight="normal">79.28</text>
<circle cx="283.05" cy="378.21" r="1.2" fill="#a08cc0"/>
<text x="283.1" y="374.6" font-size="8.03" fill="#505050" stroke="#505050" stroke-width="0.06" text-anchor="middle" font-weight="normal">81.08</text>
<circle cx="306.55" cy="395.88" r="1.2" fill="#a08cc0"/>
<text x="306.6" y="392.3" font-size="8.03" fill="#505050" stroke="#505050" stroke-width="0.06" text-anchor="middle" font-weight="normal">79.93</text>
<circle cx="330.05" cy="394.80" r="1.2" fill="#a08cc0"/>
<text x="330.1" y="391.2" font-size="8.03" fill="#505050" stroke="#505050" stroke-width="0.06" text-anchor="middle" font-weight="normal">80.00</text>
<circle cx="353.55" cy="373.76" r="1.2" fill="#a08cc0"/>
<text x="353.6" y="370.2" font-size="8.03" fill="#505050" stroke="#505050" stroke-width="0.06" text-anchor="middle" font-weight="normal">81.37</text>
<circle cx="377.05" cy="426.13" r="1.2" fill="#a08cc0"/>
<text x="377.1" y="422.5" font-size="8.03" fill="#505050" stroke="#505050" stroke-width="0.06" text-anchor="middle" font-weight="normal">77.96</text>
<circle cx="400.55" cy="428.59" r="1.2" fill="#a08cc0"/>
<text x="400.6" y="425.0" font-size="8.03" fill="#505050" stroke="#505050" stroke-width="0.06" text-anchor="middle" font-weight="normal">77.80</text>
<circle cx="424.05" cy="393.88" r="1.2" fill="#a08cc0"/>
<text x="424.1" y="390.3" font-size="8.03" fill="#505050" stroke="#505050" stroke-width="0.06" text-anchor="middle" font-weight="normal">80.06</text>
<text x="0.0" y="0.0" font-size="7.52" fill="#606060" stroke="#606060" stroke-width="0.12" text-anchor="end" font-weight="normal" transform="translate(97.55,482.1) rotate(-45)">Jan 2020</text>
<text x="0.0" y="0.0" font-size="7.52" fill="#606060" stroke="#606060" stroke-width="0.12" text-anchor="end" font-weight="normal" transform="translate(121.05,482.1) rotate(-45)">Feb 2020</text>
<text x="0.0" y="0.0" font-size="7.52" fill="#606060" stroke="#606060" stroke-width="0.12" text-anchor="end" font-weight="normal" transform="translate(144.55,482.1) rotate(-45)">Mar 2020</text>
<text x="0.0" y="0.0" font-size="7.52" fill="#606060" stroke="#606060" stroke-width="0.12" text-anchor="end" font-weight="normal" transform="translate(168.05,482.1) rotate(-45)">Apr 2020</text>
<text x="0.0" y="0.0" font-size="7.52" fill="#606060" stroke="#606060" stroke-width="0.12" text-anchor="end" font-weight="normal" transform="translate(191.55,482.1) rotate(-45)">May 2020</text>
<text x="0.0" y="0.0" font-size="7.52" fill="#606060" stroke="#606060" stroke-width="0.12" text-anchor="end" font-weight="normal" transform="translate(215.05,482.1) rotate(-45)">Jun 2020</text>
<text x="0.0" y="0.0" font-size="7.52" fill="#606060" stroke="#606060" stroke-width="0.12" text-anchor="end" font-weight="normal" transform="translate(238.55,482.1) rotate(-45)">Jul 2020</text>
<text x="0.0" y="0.0" font-size="7.52" fill="#606060" stroke="#606060" stroke-width="0.12" text-anchor="end" font-weight="normal" transform="translate(262.05,482.1) rotate(-45)">Aug 2020</text>
<text x="0.0" y="0.0" font-size="7.52" fill="#606060" stroke="#606060" stroke-width="0.12" text-anchor="end" font-weight="normal" transform="translate(285.55,482.1) rotate(-45)">Sep 2020</text>
<text x="0.0" y="0.0" font-size="7.52" fill="#606060" stroke="#606060" stroke-width="0.12" text-anchor="end" font-weight="normal" transform="translate(309.05,482.1) rotate(-45)">Oct 2020</text>
<text x="0.0" y="0.0" font-size="7.52" fill="#606060" stroke="#606060" stroke-width="0.12" text-anchor="end" font-weight="normal" transform="translate(332.55,482.1) rotate(-45)">Nov 2020</text>
<text x="0.0" y="0.0" font-size="7.52" fill="#606060" stroke="#606060" stroke-width="0.12" text-anchor="end" font-weight="normal" transform="translate(356.05,482.1) rotate(-45)">Dec 2020</text>
<text x="0.0" y="0.0" font-size="7.52" fill="#606060" stroke="#606060" stroke-width="0.12" text-anchor="end" font-weight="normal" transform="translate(379.55,482.1) rotate(-45)">Jan 2021</text>
<text x="0.0" y="0.0" font-size="7.52" fill="#606060" stroke="#606060" stroke-width="0.12" text-anchor="end" font-weight="normal" transform="translate(403.05,482.1) rotate(-45)">Feb 2021</text>
<text x="0.0" y="0.0" font-size="7.52" fill="#606060" stroke="#606060" stroke-width="0.12" text-anchor="end" font-weight="normal" transform="translate(426.55,482.1) rotate(-45)">Mar 2021</text>
<text x="0.0" y="0.0" font-size="8.03" fill="#5a5a5a" stroke="#5a5a5a" stroke-width="0.12" text-anchor="middle" font-weight="normal" transform="translate(54,414.0) rotate(-90)">#</text>
<rect x="521.2" y="356.5" width="345.00" height="126.20" fill="#e8fcd9"/>
<line x1="515.4000000000001" y1="482.70" x2="521.2" y2="482.70" stroke="#c8c8c8" stroke-width="0.8"/>
<text x="513.7" y="486.1" font-size="8.24" fill="#666" stroke="#666" stroke-width="0.12" text-anchor="end" font-weight="normal">700</text>
<line x1="515.4000000000001" y1="457.46" x2="521.2" y2="457.46" stroke="#c8c8c8" stroke-width="0.8"/>
<text x="513.7" y="460.9" font-size="8.24" fill="#666" stroke="#666" stroke-width="0.12" text-anchor="end" font-weight="normal">750</text>
<line x1="515.4000000000001" y1="432.22" x2="521.2" y2="432.22" stroke="#c8c8c8" stroke-width="0.8"/>
<text x="513.7" y="435.6" font-size="8.24" fill="#666" stroke="#666" stroke-width="0.12" text-anchor="end" font-weight="normal">800</text>
<line x1="515.4000000000001" y1="406.98" x2="521.2" y2="406.98" stroke="#c8c8c8" stroke-width="0.8"/>
<text x="513.7" y="410.4" font-size="8.24" fill="#666" stroke="#666" stroke-width="0.12" text-anchor="end" font-weight="normal">850</text>
<line x1="515.4000000000001" y1="381.74" x2="521.2" y2="381.74" stroke="#c8c8c8" stroke-width="0.8"/>
<text x="513.7" y="385.1" font-size="8.24" fill="#666" stroke="#666" stroke-width="0.12" text-anchor="end" font-weight="normal">900</text>
<line x1="515.4000000000001" y1="356.50" x2="521.2" y2="356.50" stroke="#c8c8c8" stroke-width="0.8"/>
<text x="513.7" y="359.9" font-size="8.24" fill="#666" stroke="#666" stroke-width="0.12" text-anchor="end" font-weight="normal">950</text>
<line x1="521.2" y1="482.7" x2="952.45" y2="482.7" stroke="#f2f2f2" stroke-width="0.6"/>
<line x1="521.2" y1="482.7" x2="521.2" y2="487.7" stroke="#c8c8c8" stroke-width="0.8"/>
<line x1="549.95" y1="483.7" x2="549.95" y2="488.0" stroke="#c8c8c8" stroke-width="0.8"/>
<line x1="578.70" y1="483.7" x2="578.70" y2="488.0" stroke="#c8c8c8" stroke-width="0.8"/>
<line x1="607.45" y1="483.7" x2="607.45" y2="488.0" stroke="#c8c8c8" stroke-width="0.8"/>
<line x1="636.20" y1="483.7" x2="636.20" y2="488.0" stroke="#c8c8c8" stroke-width="0.8"/>
<line x1="664.95" y1="483.7" x2="664.95" y2="488.0" stroke="#c8c8c8" stroke-width="0.8"/>
<line x1="693.70" y1="483.7" x2="693.70" y2="488.0" stroke="#c8c8c8" stroke-width="0.8"/>
<line x1="722.45" y1="483.7" x2="722.45" y2="488.0" stroke="#c8c8c8" stroke-width="0.8"/>
<line x1="751.20" y1="483.7" x2="751.20" y2="488.0" stroke="#c8c8c8" stroke-width="0.8"/>
<line x1="779.95" y1="483.7" x2="779.95" y2="488.0" stroke="#c8c8c8" stroke-width="0.8"/>
<line x1="808.70" y1="483.7" x2="808.70" y2="488.0" stroke="#c8c8c8" stroke-width="0.8"/>
<line x1="837.45" y1="483.7" x2="837.45" y2="488.0" stroke="#c8c8c8" stroke-width="0.8"/>
<line x1="866.20" y1="483.7" x2="866.20" y2="488.0" stroke="#c8c8c8" stroke-width="0.8"/>
<line x1="894.95" y1="483.7" x2="894.95" y2="488.0" stroke="#c8c8c8" stroke-width="0.8"/>
<line x1="923.70" y1="483.7" x2="923.70" y2="488.0" stroke="#c8c8c8" stroke-width="0.8"/>
<line x1="952.45" y1="483.7" x2="952.45" y2="488.0" stroke="#c8c8c8" stroke-width="0.8"/>
<line x1="535.58" y1="374.17" x2="938.08" y2="432.22" stroke="#b3ec78" stroke-width="1.5" stroke-dasharray="4,2"/>
<polyline points="535.58,395.07 564.33,384.42 593.08,370.08 621.83,387.29 650.58,407.23 679.33,384.06 708.08,404.25 736.83,390.07 765.58,374.32 794.33,415.01 823.08,403.29 851.83,397.89 880.58,453.83 909.33,453.88 938.08,432.67" fill="none" stroke="#7ab653" stroke-width="1.7" stroke-linejoin="miter"/>
<circle cx="535.58" cy="395.07" r="1.2" fill="#6ca040"/>
<text x="535.6" y="391.5" font-size="8.03" fill="#505050" stroke="#505050" stroke-width="0.06" text-anchor="middle" font-weight="normal">873.6</text>
<circle cx="564.33" cy="384.42" r="1.2" fill="#6ca040"/>
<text x="564.3" y="380.8" font-size="8.03" fill="#505050" stroke="#505050" stroke-width="0.06" text-anchor="middle" font-weight="normal">894.7</text>
<circle cx="593.08" cy="370.08" r="1.2" fill="#6ca040"/>
<text x="593.1" y="366.5" font-size="8.03" fill="#505050" stroke="#505050" stroke-width="0.06" text-anchor="middle" font-weight="normal">923.1</text>
<circle cx="621.83" cy="387.29" r="1.2" fill="#6ca040"/>
<text x="621.8" y="383.7" font-size="8.03" fill="#505050" stroke="#505050" stroke-width="0.06" text-anchor="middle" font-weight="normal">889.0</text>
<circle cx="650.58" cy="407.23" r="1.2" fill="#6ca040"/>
<text x="650.6" y="403.6" font-size="8.03" fill="#505050" stroke="#505050" stroke-width="0.06" text-anchor="middle" font-weight="normal">849.5</text>
<circle cx="679.33" cy="384.06" r="1.2" fill="#6ca040"/>
<text x="679.3" y="380.5" font-size="8.03" fill="#505050" stroke="#505050" stroke-width="0.06" text-anchor="middle" font-weight="normal">895.4</text>
<circle cx="708.08" cy="404.25" r="1.2" fill="#6ca040"/>
<text x="708.1" y="400.7" font-size="8.03" fill="#505050" stroke="#505050" stroke-width="0.06" text-anchor="middle" font-weight="normal">855.4</text>
<circle cx="736.83" cy="390.07" r="1.2" fill="#6ca040"/>
<text x="736.8" y="386.5" font-size="8.03" fill="#505050" stroke="#505050" stroke-width="0.06" text-anchor="middle" font-weight="normal">883.5</text>
<circle cx="765.58" cy="374.32" r="1.2" fill="#6ca040"/>
<text x="765.6" y="370.7" font-size="8.03" fill="#505050" stroke="#505050" stroke-width="0.06" text-anchor="middle" font-weight="normal">914.7</text>
<circle cx="794.33" cy="415.01" r="1.2" fill="#6ca040"/>
<text x="794.3" y="411.4" font-size="8.03" fill="#505050" stroke="#505050" stroke-width="0.06" text-anchor="middle" font-weight="normal">834.1</text>
<circle cx="823.08" cy="403.29" r="1.2" fill="#6ca040"/>
<text x="823.1" y="399.7" font-size="8.03" fill="#505050" stroke="#505050" stroke-width="0.06" text-anchor="middle" font-weight="normal">857.3</text>
<circle cx="851.83" cy="397.89" r="1.2" fill="#6ca040"/>
<text x="851.8" y="394.3" font-size="8.03" fill="#505050" stroke="#505050" stroke-width="0.06" text-anchor="middle" font-weight="normal">868.0</text>
<circle cx="880.58" cy="453.83" r="1.2" fill="#6ca040"/>
<text x="880.6" y="450.2" font-size="8.03" fill="#505050" stroke="#505050" stroke-width="0.06" text-anchor="middle" font-weight="normal">757.2</text>
<circle cx="909.33" cy="453.88" r="1.2" fill="#6ca040"/>
<text x="909.3" y="450.3" font-size="8.03" fill="#505050" stroke="#505050" stroke-width="0.06" text-anchor="middle" font-weight="normal">757.1</text>
<circle cx="938.08" cy="432.67" r="1.2" fill="#6ca040"/>
<text x="938.1" y="429.1" font-size="8.03" fill="#505050" stroke="#505050" stroke-width="0.06" text-anchor="middle" font-weight="normal">799.1</text>
<text x="0.0" y="0.0" font-size="7.52" fill="#606060" stroke="#606060" stroke-width="0.12" text-anchor="end" font-weight="normal" transform="translate(537.08,494.7) rotate(-20)">Jan 2020</text>
<text x="0.0" y="0.0" font-size="7.52" fill="#606060" stroke="#606060" stroke-width="0.12" text-anchor="end" font-weight="normal" transform="translate(565.83,494.7) rotate(-20)">Feb 2020</text>
<text x="0.0" y="0.0" font-size="7.52" fill="#606060" stroke="#606060" stroke-width="0.12" text-anchor="end" font-weight="normal" transform="translate(594.58,494.7) rotate(-20)">Mar 2020</text>
<text x="0.0" y="0.0" font-size="7.52" fill="#606060" stroke="#606060" stroke-width="0.12" text-anchor="end" font-weight="normal" transform="translate(623.33,494.7) rotate(-20)">Apr 2020</text>
<text x="0.0" y="0.0" font-size="7.52" fill="#606060" stroke="#606060" stroke-width="0.12" text-anchor="end" font-weight="normal" transform="translate(652.08,494.7) rotate(-20)">May 2020</text>
<text x="0.0" y="0.0" font-size="7.52" fill="#606060" stroke="#606060" stroke-width="0.12" text-anchor="end" font-weight="normal" transform="translate(680.83,494.7) rotate(-20)">Jun 2020</text>
<text x="0.0" y="0.0" font-size="7.52" fill="#606060" stroke="#606060" stroke-width="0.12" text-anchor="end" font-weight="normal" transform="translate(709.58,494.7) rotate(-20)">Jul 2020</text>
<text x="0.0" y="0.0" font-size="7.52" fill="#606060" stroke="#606060" stroke-width="0.12" text-anchor="end" font-weight="normal" transform="translate(738.33,494.7) rotate(-20)">Aug 2020</text>
<text x="0.0" y="0.0" font-size="7.52" fill="#606060" stroke="#606060" stroke-width="0.12" text-anchor="end" font-weight="normal" transform="translate(767.08,494.7) rotate(-20)">Sep 2020</text>
<text x="0.0" y="0.0" font-size="7.52" fill="#606060" stroke="#606060" stroke-width="0.12" text-anchor="end" font-weight="normal" transform="translate(795.83,494.7) rotate(-20)">Oct 2020</text>
<text x="0.0" y="0.0" font-size="7.52" fill="#606060" stroke="#606060" stroke-width="0.12" text-anchor="end" font-weight="normal" transform="translate(824.58,494.7) rotate(-20)">Nov 2020</text>
<text x="0.0" y="0.0" font-size="7.52" fill="#606060" stroke="#606060" stroke-width="0.12" text-anchor="end" font-weight="normal" transform="translate(853.33,494.7) rotate(-20)">Dec 2020</text>
<text x="0.0" y="0.0" font-size="7.52" fill="#606060" stroke="#606060" stroke-width="0.12" text-anchor="end" font-weight="normal" transform="translate(882.08,494.7) rotate(-20)">Jan 2021</text>
<text x="0.0" y="0.0" font-size="7.52" fill="#606060" stroke="#606060" stroke-width="0.12" text-anchor="end" font-weight="normal" transform="translate(910.83,494.7) rotate(-20)">Feb 2021</text>
<text x="0.0" y="0.0" font-size="7.52" fill="#606060" stroke="#606060" stroke-width="0.12" text-anchor="end" font-weight="normal" transform="translate(939.58,494.7) rotate(-20)">Mar 2021</text>
<text x="0.0" y="0.0" font-size="8.03" fill="#5a5a5a" stroke="#5a5a5a" stroke-width="0.12" text-anchor="middle" font-weight="normal" textLength="18.5" lengthAdjust="spacingAndGlyphs" transform="translate(496,419.6) rotate(-90)">$,000</text>
<line x1="228" y1="519.8" x2="236.5" y2="519.8" stroke="#c9a6e8" stroke-width="1.5" stroke-dasharray="2.2,0.9"/>
<circle cx="232.2" cy="519.8" r="1.3" fill="#b690dc"/>
<text x="239.0" y="522.6" font-size="8.24" fill="#606060" stroke="#606060" stroke-width="0.12" text-anchor="start" font-weight="normal" textLength="14.0" lengthAdjust="spacingAndGlyphs">ASP</text>
<line x1="675.5" y1="519.8" x2="684.5" y2="519.8" stroke="#8fd158" stroke-width="1.5" stroke-dasharray="2.2,0.9"/>
<circle cx="680" cy="519.8" r="1.3" fill="#6fbf3a"/>
<text x="687.5" y="522.6" font-size="8.24" fill="#606060" stroke="#606060" stroke-width="0.12" text-anchor="start" font-weight="normal" textLength="74.5" lengthAdjust="spacingAndGlyphs">Revenue per FTE(Bud)</text>
<rect x="21" y="597" width="958" height="1" fill="#ececec"/>
<text x="32.3" y="608.6" font-size="8.03" fill="#777" stroke="#777" stroke-width="0.12" text-anchor="start" font-weight="normal" textLength="240.2" lengthAdjust="spacingAndGlyphs">© 2020 Workday, Inc. All rights reserved. Proprietary and Confidential.</text>
<rect x="281" y="601" width="0.8" height="9" fill="#ddd"/>
<text x="291.7" y="608.6" font-size="8.03" fill="#4f8ad6" stroke="#4f8ad6" stroke-width="0.12" text-anchor="start" font-weight="normal" textLength="47.8" lengthAdjust="spacingAndGlyphs">Privacy Policy</text>
</svg></body></html>
